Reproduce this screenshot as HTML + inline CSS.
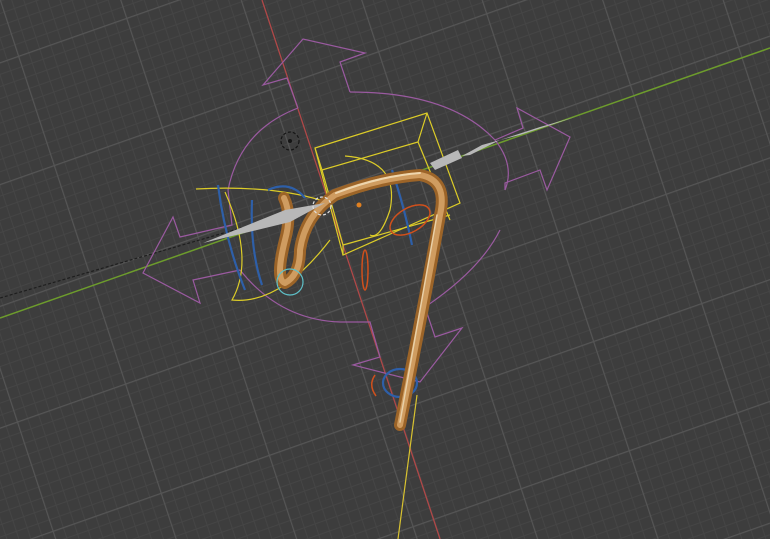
<!DOCTYPE html>
<html><head><meta charset="utf-8"><style>
html,body{margin:0;padding:0;background:#3d3d3d;overflow:hidden}
svg{display:block}
</style></head><body>
<svg width="770" height="539" viewBox="0 0 770 539" xmlns="http://www.w3.org/2000/svg">
<defs>
<pattern id="g" width="115" height="115" patternUnits="userSpaceOnUse" patternTransform="matrix(0.94,-0.33,0.31,0.95,126,18)">
<rect width="115" height="115" fill="#3d3d3d"/>
<g stroke="#454545" stroke-width="1">
<path d="M11.5 0V115M23 0V115M34.5 0V115M46 0V115M57.5 0V115M69 0V115M80.5 0V115M92 0V115M103.5 0V115"/>
<path d="M0 11.5H115M0 23H115M0 34.5H115M0 46H115M0 57.5H115M0 69H115M0 80.5H115M0 92H115M0 103.5H115"/>
</g>
<path d="M0.5 0V115M0 0.5H115" stroke="#555555" stroke-width="1.4"/>
</pattern>
</defs>
<rect width="770" height="539" fill="url(#g)"/>
<line x1="0" y1="318" x2="770" y2="48" stroke="#6d9c2c" stroke-width="1.5"/>
<line x1="0" y1="298" x2="320" y2="205" stroke="#1e1e1e" stroke-width="1.2" stroke-dasharray="3,2"/>
<line x1="262" y1="0" x2="440" y2="539" stroke="#b04848" stroke-width="1.3"/>
<path d="M417 395 L398 539" stroke="#d8c230" stroke-width="1.2" fill="none"/>
<g fill="none" stroke="#9a5aa0" stroke-width="1.2">
<path d="M350 92 Q450 92 495 140 Q515 165 505 190"/>
<path d="M298 108 Q240 130 228 190"/>
<path d="M240 270 Q280 320 340 322"/>
<path d="M425 307 Q480 270 500 230"/>
<path d="M298 108 L287 78 L263 85 L303 39 L365 53 L340 62 L350 92"/>
<path d="M505 190 L505 183 L540 170 L547 190 L570 137 L517 108 L523 128 L495 140"/>
<path d="M228 190 L232 225 L180 237 L173 217 L143 273 L200 303 L193 280 L240 270"/>
<path d="M340 322 L370 322 L380 357 L353 365 L420 382 L462 328 L435 337 L425 307"/>
</g>
<g fill="none" stroke="#dccc28" stroke-width="1.2">
<path d="M315 148 L427 113 L460 203 L343 255 Z"/>
<path d="M315 148 L322 170 L418 142 L427 113"/>
<path d="M322 170 L343 245 L343 255"/>
<path d="M418 142 L450 220"/>
<path d="M343 245 L450 215"/>
<path d="M196 189 Q270 185 320 200 M225 192 Q255 260 232 300 Q280 305 330 240 M345 156 Q400 160 390 210 Q380 240 370 235"/>
</g>
<g fill="none" stroke="#2e5fa8" stroke-width="2.2">
<path d="M218 185 Q225 240 245 290"/>
<path d="M268 190 Q290 180 305 198"/>
<path d="M392 170 Q405 210 412 245"/>
<path d="M252 200 Q250 250 262 285"/>
<ellipse cx="400" cy="383" rx="17" ry="14"/>
</g>
<g fill="none" stroke="#d0501c" stroke-width="1.5">
<ellipse cx="365" cy="270" rx="3" ry="20"/>
<path d="M375 375 Q368 385 376 396"/>
<ellipse cx="410" cy="220" rx="22" ry="12" transform="rotate(-30 410 220)"/>
</g>
<g fill="none" stroke-linecap="round" stroke-linejoin="round">
<path d="M284 198 Q292 215 285 240 Q275 280 285 283 Q300 275 300 250 Q305 215 335 195 Q380 178 420 175 Q448 180 440 215 Q425 300 400 425" stroke="#9c6428" stroke-width="12"/>
<path d="M284 198 Q292 215 285 240 Q275 280 285 283 Q300 275 300 250 Q305 215 335 195 Q380 178 420 175 Q448 180 440 215 Q425 300 400 425" stroke="#cf9c60" stroke-width="6"/>
<path d="M336 193 Q380 176 420 173" stroke="#eed6ae" stroke-width="2"/>
<path d="M437 215 Q422 300 400 422" stroke="#e8d0a8" stroke-width="1.5"/>
</g>
<circle cx="290" cy="282" r="13" fill="none" stroke="#5ec0c8" stroke-width="1.2"/>
<g fill="#b8b8b8">
<polygon points="203,243 285,210 325,203 290,222"/>
<polygon points="430,163 458,150 462,158 435,170"/>
<polygon points="462,156 482,145 500,140 470,155"/>
<polygon points="500,140 540,127 575,117 520,135"/>
</g>
<circle cx="322" cy="206" r="9" fill="none" stroke="#e0e0e0" stroke-width="1.2" stroke-dasharray="3,2"/>
<circle cx="359" cy="205" r="2.5" fill="#e08020"/>
<circle cx="290" cy="141" r="9" fill="none" stroke="#151515" stroke-width="1.2" stroke-dasharray="3,2"/>
<circle cx="290" cy="141" r="2" fill="#151515"/>
</svg>
</body></html>
